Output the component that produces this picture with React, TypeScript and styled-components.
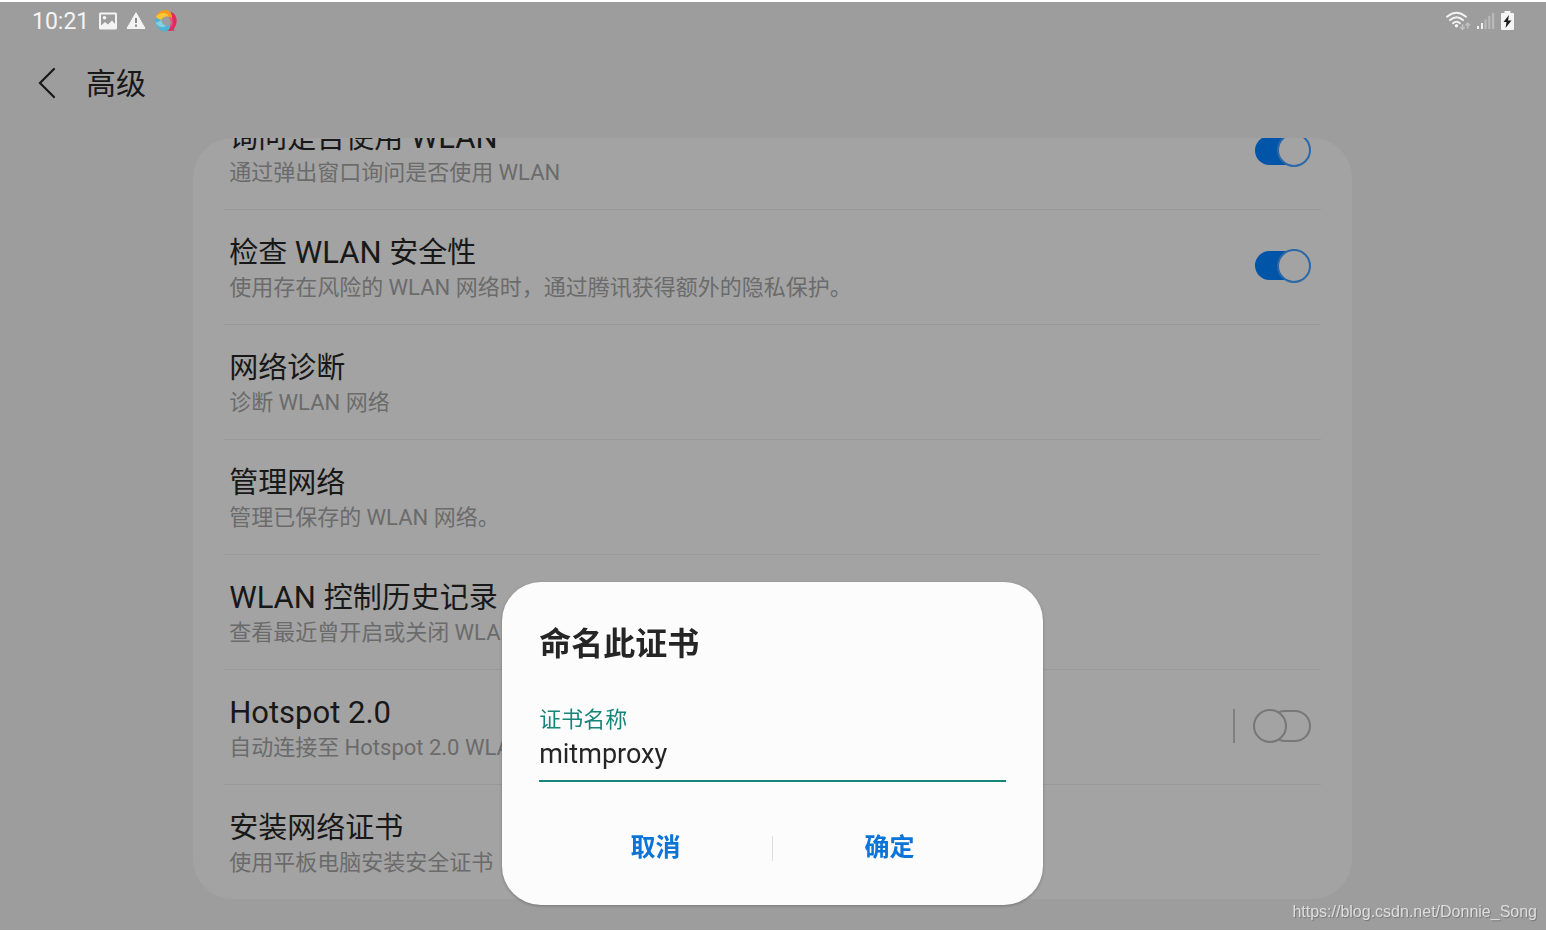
import React, { useState } from "react";
import styled, { createGlobalStyle, css } from "styled-components";

const GlobalStyle = createGlobalStyle`
  *, *::before, *::after { box-sizing: border-box; }
  body {
    margin: 0;
    background: #fff;
    font-family: Roboto, "Noto Sans CJK SC", sans-serif;
  }
`;

const Screen = styled.div`
  display: flex;
  flex-direction: column;
  height: 100vh;
  overflow: hidden;
  border-top: 2px solid #fff;
  border-bottom: 1px solid #fff;
  background: #9d9d9d;
`;

const StatusBar = styled.div`
  display: flex;
  flex: none;
  justify-content: space-between;
  height: 38px;
  padding: 0 32px;
`;

const StatusGroup = styled.div<{ $gap: number }>`
  display: flex;
  align-items: center;
  gap: ${(p) => p.$gap}px;
`;

const Clock = styled.time`
  padding-top: 2px;
  color: #f4f4f4;
  font-size: 23px;
  line-height: 36px;
`;

const Icon = styled.svg`
  display: block;
  flex: none;
`;

const Header = styled.header`
  display: flex;
  flex: none;
  align-items: center;
  gap: 24px;
  height: 98px;
  padding: 0 32px 12px;
`;

const BackButton = styled.button`
  display: block;
  padding: 0;
  border: 0;
  background: none;
`;

const PageTitle = styled.h1`
  margin: 0;
  padding-top: 2px;
  color: #181818;
  font-size: 30px;
  font-weight: 400;
  line-height: 40px;
`;

const Content = styled.div`
  display: flex;
  flex: 1;
  min-height: 0;
  justify-content: center;
  padding: 0 1px 31px 0;
`;

const Card = styled.main`
  display: flex;
  flex-direction: column;
  justify-content: flex-end;
  width: 75%;
  padding: 0 31px;
  overflow: hidden;
  border-radius: 40px;
  background: #a3a3a3;
`;

const Row = styled.section`
  display: flex;
  flex: none;
  align-items: center;
  gap: 18px;
  height: 115px;
  padding: 0 10px 3px 5px;

  & + & {
    border-top: 1px solid #999;
  }
`;

const RowText = styled.div`
  flex: 1;
  min-width: 0;
  padding-top: 5px;
`;

const RowTitle = styled.h2`
  margin: 0;
  color: #181818;
  font-size: 29px;
  font-weight: 400;
  line-height: 40px;
  white-space: nowrap;
`;

const Latin = styled.span`
  font-size: 31px;
`;

const RowNote = styled.p`
  margin: 0;
  color: #6b6b6b;
  font-size: 22px;
  line-height: 30px;
  white-space: nowrap;
`;

const RowRule = styled.span`
  width: 2px;
  height: 34px;
  background: #808080;
`;

const offTrack = css`
  justify-self: end;
  width: 42px;
  height: 32px;
  border: 2px solid #777;
  border-radius: 16px;
`;

const onTrack = css`
  justify-self: start;
  width: 50px;
  height: 29px;
  border-radius: 15px;
  background: #0055a8;
`;

const Switch = styled.input`
  display: grid;
  flex: none;
  align-items: center;
  width: ${(p) => (p.checked ? 56 : 58)}px;
  height: 34px;
  margin: 0;
  appearance: none;

  &::before,
  &::after {
    grid-area: 1 / 1;
    content: "";
  }

  &::before {
    ${(p) => (p.checked ? onTrack : offTrack)}
  }

  &::after {
    justify-self: ${(p) => (p.checked ? "end" : "start")};
    width: 34px;
    height: 34px;
    border: 2px solid ${(p) => (p.checked ? "#2c68a7" : "#777")};
    border-radius: 50%;
    background: #a3a3a3;
  }
`;

const DialogLayer = styled.div`
  position: fixed;
  inset: 0;
  display: flex;
  align-items: flex-end;
  justify-content: center;
  padding: 0 1px 26px 0;
`;

const Dialog = styled.form`
  display: flex;
  flex-direction: column;
  width: 35%;
  padding: 38px 37px 34px;
  border-radius: 39px;
  background: #fcfcfc;
  box-shadow: 0 1px 3px rgba(0, 0, 0, 0.25);
`;

const DialogTitle = styled.h2`
  margin: 0 0 36px;
  color: #252525;
  font-size: 32px;
  font-weight: 700;
  line-height: 48px;
`;

const FieldLabel = styled.label`
  color: #16857a;
  font-size: 22px;
  line-height: 32px;
`;

const Field = styled.input`
  width: 100%;
  height: 46px;
  padding: 0 0 8px;
  border: 0;
  border-bottom: 2px solid #16857a;
  border-radius: 0;
  outline: 0;
  background: none;
  color: #252525;
  font: 27px Roboto, "Noto Sans CJK SC", sans-serif;
`;

const Actions = styled.div`
  display: flex;
  align-items: center;
  margin-top: 43px;
`;

const ActionRule = styled.span`
  width: 1px;
  height: 25px;
  background: #dedede;
`;

const ActionButton = styled.button`
  flex: 1;
  padding: 0;
  border: 0;
  background: none;
  color: #0a74d8;
  font: 700 25px/46px Roboto, "Noto Sans CJK SC", sans-serif;
`;

const Watermark = styled.a`
  position: fixed;
  right: 9px;
  bottom: 9px;
  color: #dedede;
  font: 16px/20px "Liberation Sans", sans-serif;
  text-decoration: none;
  text-shadow: 1px 1px 1px rgba(0, 0, 0, 0.25);
`;

type Setting = {
  id: string;
  title: React.ReactNode;
  note: string;
  toggle?: boolean;
  ruled?: boolean;
};

const settings: Setting[] = [
  { id: "ask", title: <>询问是否使用<Latin> WLAN</Latin></>, note: "通过弹出窗口询问是否使用 WLAN", toggle: true },
  { id: "security", title: <>检查<Latin> WLAN </Latin>安全性</>, note: "使用存在风险的 WLAN 网络时，通过腾讯获得额外的隐私保护。", toggle: true },
  { id: "diagnose", title: "网络诊断", note: "诊断 WLAN 网络" },
  { id: "manage", title: "管理网络", note: "管理已保存的 WLAN 网络。" },
  { id: "history", title: <><Latin>WLAN </Latin>控制历史记录</>, note: "查看最近曾开启或关闭 WLAN" },
  { id: "hotspot", title: <Latin>Hotspot 2.0</Latin>, note: "自动连接至 Hotspot 2.0 WLAN", toggle: false, ruled: true },
  { id: "cert", title: "安装网络证书", note: "使用平板电脑安装安全证书" },
];

function SettingRow({ id, title, note, toggle, ruled }: Setting) {
  const [on, setOn] = useState(Boolean(toggle));
  return (
    <Row>
      <RowText>
        <RowTitle>
          {toggle === undefined ? title : <label htmlFor={id}>{title}</label>}
        </RowTitle>
        <RowNote>{note}</RowNote>
      </RowText>
      {ruled && <RowRule />}
      {toggle !== undefined && (
        <Switch id={id} type="checkbox" role="switch" checked={on} onChange={() => setOn(!on)} />
      )}
    </Row>
  );
}

function PictureIcon() {
  return (
    <Icon width="19" height="18" viewBox="-1 0 19 18" aria-hidden="true">
      <path
        fill="#f4f4f4"
        fillRule="evenodd"
        d="M1.500 .500h15A1.500 1.500 0 0 1 18 2v14a1.500 1.500 0 0 1-1.500 1.500h-15A1.500 1.500 0 0 1 0 16V2A1.500 1.500 0 0 1 1.500 .500ZM2 2.500v11l4-3.500 3 2.500 4-4 3 3.500v-9.500ZM5.500 4a1.800 1.800 0 1 1 0 3.600 1.800 1.800 0 0 1 0-3.600Z"
      />
    </Icon>
  );
}

function WarningIcon() {
  return (
    <Icon width="20" height="18" viewBox="0 0 20 18" aria-hidden="true">
      <path fill="#f4f4f4" stroke="#f4f4f4" strokeLinejoin="round" d="M10 .700 19 16.500H1Z" />
      <path fill="#8c8c8c" d="M9 6h2v5H9zM9 12.500h2v2.200H9z" />
    </Icon>
  );
}

function SwirlIcon() {
  return (
    <Icon width="22" height="22" viewBox="0 0 22 22" aria-hidden="true">
      <path fill="#4fb4d2" d="M0 9C.500 8.500 3 8.500 6.500 9.500A5 5 0 0 0 11.500 15.500c1.500.500 3 .300 4-.500.500 3-1.500 6-5 6.500C4 21.500 0 15.500 0 9Z" />
      <path fill="#86cfdf" d="M.500 12.500C3 12.500 5 11 6.500 9.500c0 3.500 2 6 5 6C8.500 18.500 3.500 18 .500 12.500Z" />
      <path fill="#e12a5f" d="M15.500 1.500c4 1.500 6.300 5.500 6.200 9.500-.200 3.500-1.500 6-3.200 8l1.500 1.500L12 21c2.500-1 3.500-3.500 3.500-6 1-2.500.500-5.500-1.500-8 1 .200 2.300.700 3 1.500 0-2.500-.500-4.700-1.500-7Z" />
      <path fill="#f0537d" d="M17 8.500c1.500 3 1 6.500-1.500 9 .500-1.500.200-2 0-2.500 1-2.500.500-5.500-1.500-8 1 .200 2.300.700 3 1.500Z" />
      <path fill="#f59a1b" d="M1 6.500C3 2 7 0 11 0c4 .300 6 4 6 8.500C15 6.500 12.500 5.800 10 6.500 8.500 7 7.500 8 6.500 9.500 4.500 9.500 2.500 8.500 1 6.500Z" />
      <path fill="#fdc733" d="M1 6.500C4 3 8.500 2 12 4l2 2.500c-3-.800-6 0-7.500 3C4.500 9.500 2.500 8.500 1 6.500Z" />
    </Icon>
  );
}

function WifiIcon() {
  return (
    <Icon width="26" height="21" viewBox="0 0 26 21" aria-hidden="true">
      <g fill="none" stroke="#f2f2f2" strokeWidth="2" strokeLinecap="round">
        <path d="M2 5.700q9.500-8 19 0" />
        <path d="M5 9.100q6.500-5.600 13 0" />
        <path d="M8 12.200q3.500-3 7 0" />
      </g>
      <circle cx="11.500" cy="14.800" r="1.700" fill="#f2f2f2" />
      <path fill="none" stroke="#c2c2c2" strokeWidth="1.500" d="M17.500 13v5M15.300 16l2.200 2.300 2.200-2.300M22.800 17.500v-5M20.600 14.500l2.200-2.300 2.200 2.300" />
    </Icon>
  );
}

function SignalIcon() {
  return (
    <Icon width="18" height="18" viewBox="0 0 18 18" aria-hidden="true">
      <path fill="#f0f0f0" d="M0 14h2v3H0zM4 11h2v6H4z" />
      <path fill="#bababa" d="M7.500 7.500h2.200V17H7.500zM11.200 4h2.200v13h-2.200zM15 1h2.200v16H15z" />
    </Icon>
  );
}

function BatteryIcon() {
  return (
    <Icon width="13" height="20" viewBox="0 0 13 20" aria-hidden="true">
      <path fill="#f4f4f4" d="M3.500 0h6v2H12a1 1 0 0 1 1 1v15a1 1 0 0 1-1 1H1a1 1 0 0 1-1-1V3a1 1 0 0 1 1-1h2.500Z" />
      <path fill="#1c1c1c" d="M8 4 2.500 11h3L4.500 17l6-7.500H7Z" />
    </Icon>
  );
}

export default function App() {
  const [name, setName] = useState("mitmproxy");
  return (
    <>
      <GlobalStyle />
      <Screen>
        <StatusBar>
          <StatusGroup $gap={9}>
            <Clock>10:21</Clock>
            <PictureIcon />
            <WarningIcon />
            <SwirlIcon />
          </StatusGroup>
          <StatusGroup $gap={6}>
            <WifiIcon />
            <SignalIcon />
            <BatteryIcon />
          </StatusGroup>
        </StatusBar>
        <Header>
          <BackButton type="button" aria-label="返回">
            <Icon width="30" height="32" viewBox="0 0 30 32" aria-hidden="true">
              <path d="M22 2 8 16l14 14" fill="none" stroke="#181818" strokeWidth="2.200" strokeLinecap="round" />
            </Icon>
          </BackButton>
          <PageTitle>高级</PageTitle>
        </Header>
        <Content>
          <Card>
            {settings.map((s) => (
              <SettingRow key={s.id} {...s} />
            ))}
          </Card>
        </Content>
      </Screen>
      <DialogLayer>
        <Dialog role="dialog" aria-labelledby="dialog-title" onSubmit={(e) => e.preventDefault()}>
          <DialogTitle id="dialog-title">命名此证书</DialogTitle>
          <FieldLabel htmlFor="cert-name">证书名称</FieldLabel>
          <Field id="cert-name" type="text" value={name} onChange={(e) => setName(e.target.value)} />
          <Actions>
            <ActionButton type="button">取消</ActionButton>
            <ActionRule />
            <ActionButton type="submit">确定</ActionButton>
          </Actions>
        </Dialog>
      </DialogLayer>
      <Watermark href="https://blog.csdn.net/Donnie_Song">https://blog.csdn.net/Donnie_Song</Watermark>
    </>
  );
}
